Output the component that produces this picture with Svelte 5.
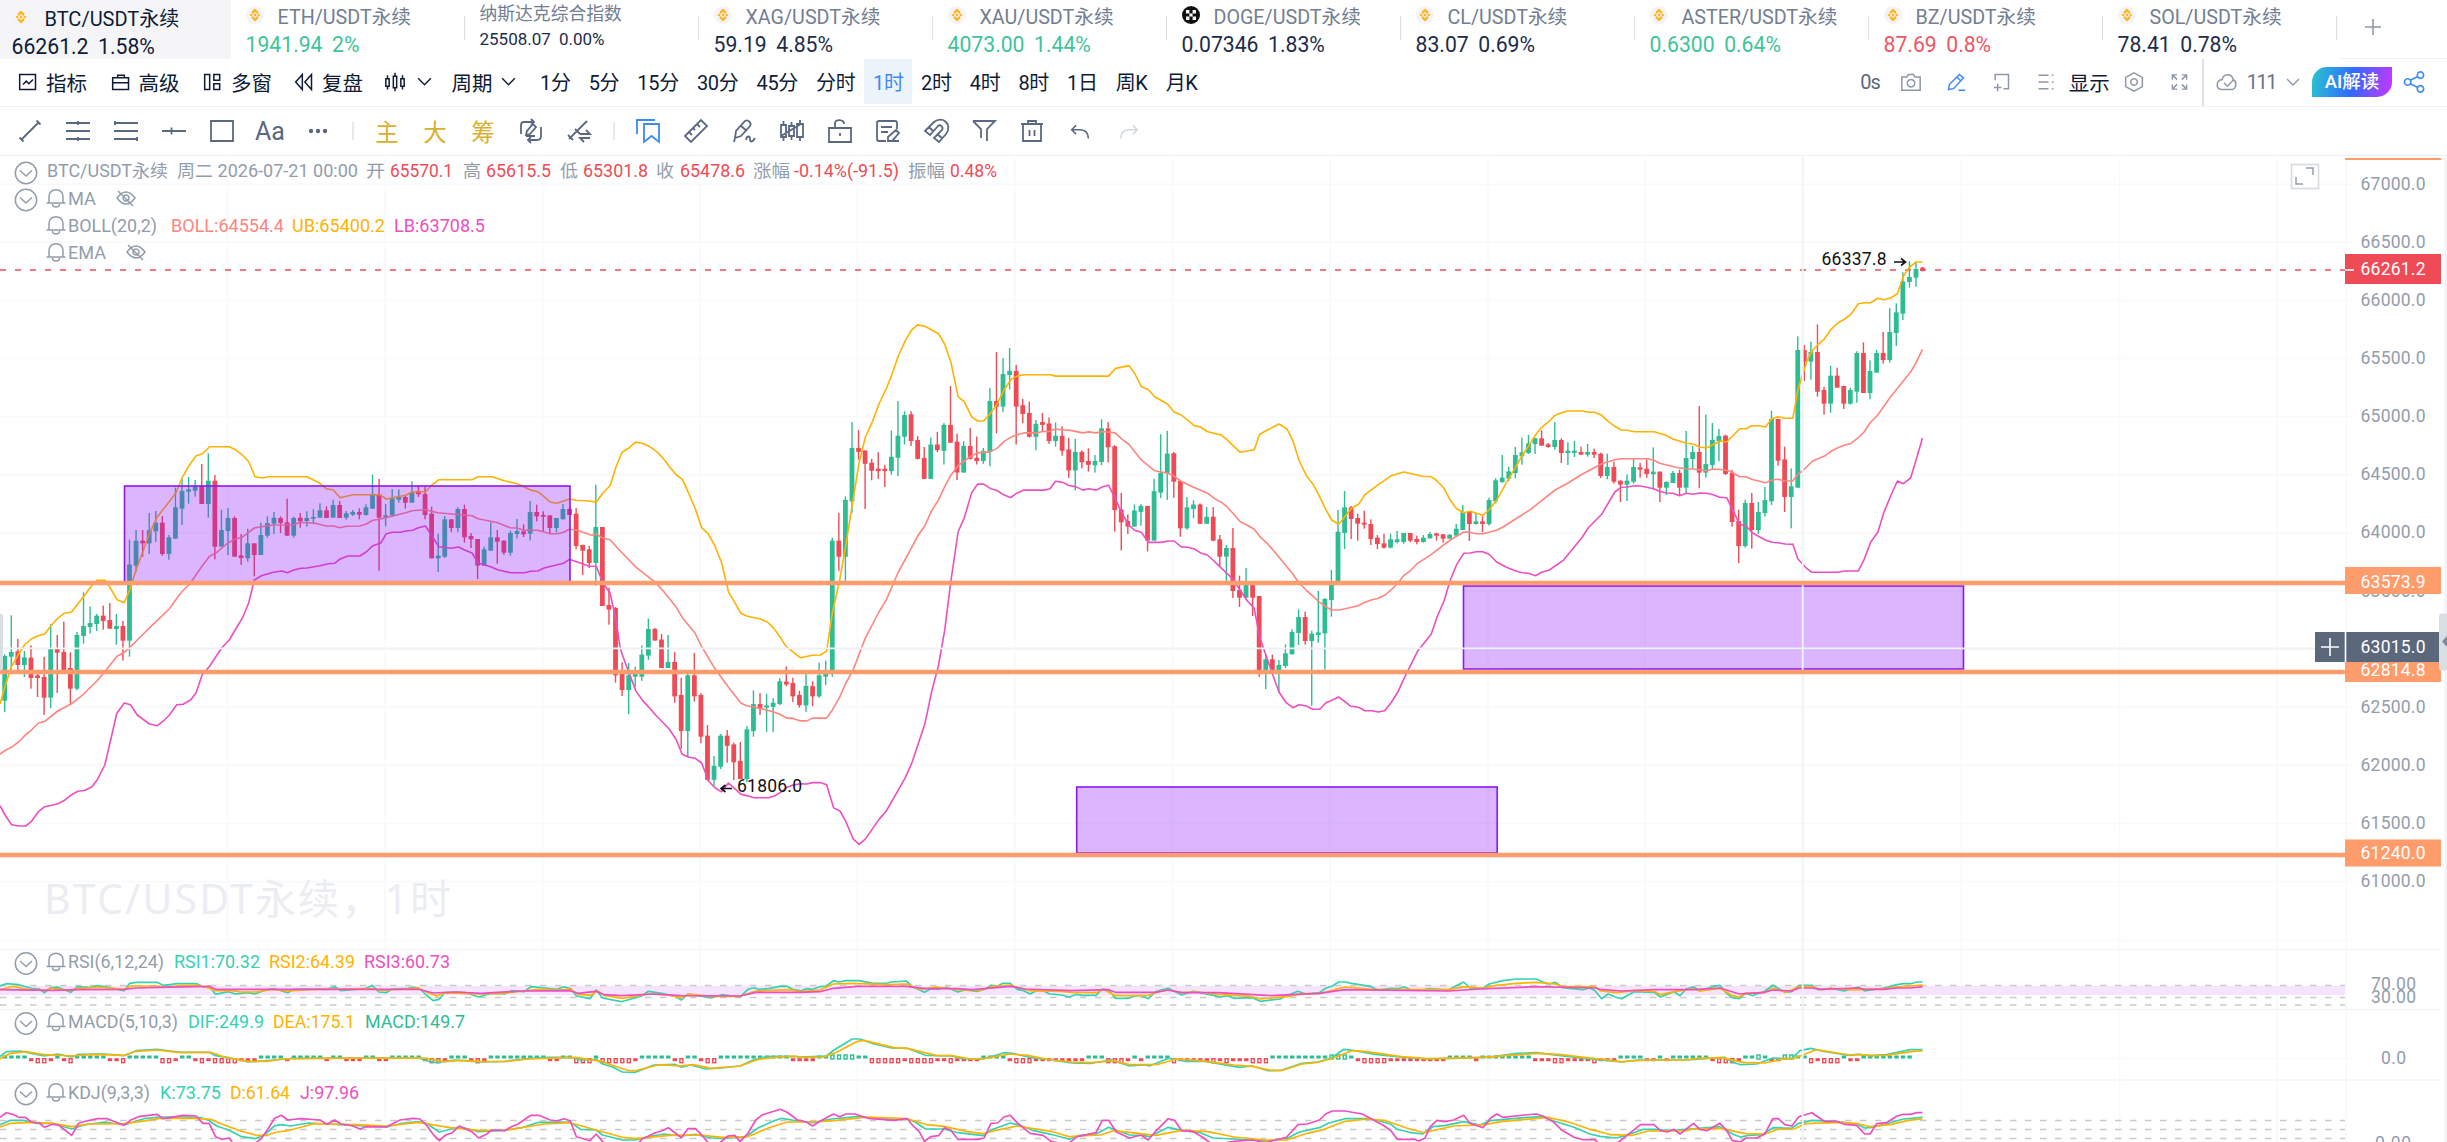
<script>
  const tickers = [
    { name: 'BTC/USDT永续', price: '66261.2', change: '1.58%', tone: 'dark', logo: 'bnb', active: true },
    { name: 'ETH/USDT永续', price: '1941.94', change: '2%', tone: 'up', logo: 'bnb' },
    { name: '纳斯达克综合指数', price: '25508.07', change: '0.00%', tone: 'flat', small: true },
    { name: 'XAG/USDT永续', price: '59.19', change: '4.85%', tone: 'flat', logo: 'bnb' },
    { name: 'XAU/USDT永续', price: '4073.00', change: '1.44%', tone: 'up', logo: 'bnb' },
    { name: 'DOGE/USDT永续', price: '0.07346', change: '1.83%', tone: 'flat', logo: 'okx' },
    { name: 'CL/USDT永续', price: '83.07', change: '0.69%', tone: 'flat', logo: 'bnb' },
    { name: 'ASTER/USDT永续', price: '0.6300', change: '0.64%', tone: 'up', logo: 'bnb' },
    { name: 'BZ/USDT永续', price: '87.69', change: '0.8%', tone: 'down', logo: 'bnb' },
    { name: 'SOL/USDT永续', price: '78.41', change: '0.78%', tone: 'flat', logo: 'bnb' }
  ];

  const periods = ['1分', '5分', '15分', '30分', '45分', '分时', '1时', '2时', '4时', '8时', '1日', '周K', '月K'];

  const tools = ['line', 'parallel', 'fib', 'hline', 'rect', 'text', 'dots', '|', '主', '大', '筹', 'autodraw', 'swap', '|',
    'bookmark', 'ruler', 'brush', 'patterns', 'lock', 'note', 'magnet', 'filter', 'trash', 'undo', 'redo'];

  // 24x24 stroke icons
  const icons = {
    line: 'M3.5 20.5 20.5 3.5M1.5 18.5l4 4M18.5 1.5l4 4',
    parallel: 'M0 4h24M0 12h24M0 20h24M12 2v4M12 18v4',
    fib: 'M0 4h24M0 12h24M0 20h24M1 2v4M23 18v4',
    hline: 'M0 12h24M9.5 8.5v7',
    rect: 'M1 2h22v20H1z',
    autodraw: 'M2 15V6c0-2 1-3 3-3h10M12 0l3 3-3 3M22 8v9c0 3-1 4-4 4H9M12 18l-3 3 3 3M7 16l1-4 6-7 3 3-6 7zM7 17h9',
    swap: 'M2 20 20 2M1 16l5 5M13 15h10l-4-4M23 19H13l4 4M8 10l5 5',
    bookmark: 'M8 5h15v18l-7.500-6L8 23zM1 15V1h18',
    ruler: 'M1 17 17 1l6 6L7 23zM5 13l3 3M9 9l2 2M13 5l3 3',
    brush: 'M3 19l1-7L13 2c3-2 7 2 5 5L9 17zM3 19l-1 4M9 7l6 5M14 21c1-5 4-4 4-1s2 4 5-1',
    patterns: 'M1 6h5v12H1zM9 7h5v10H9zM17 5h6v13h-6zM3.500 2v4M3.500 18v4M11.500 3v4M11.500 17v4M20 1v4M20 18v4M1 17l20-12',
    lock: 'M1 9h22v14H1zM7 9V4c0-4 9-4 9 1M12 14v3',
    note: 'M10 22H3c-1.500 0-2-.5-2-2V4c0-1.500.5-2 2-2h16c1.500 0 2 .5 2 2v6M5 8h11M5 13h7M12 22v-4l8-7 3 3-7 8zM16 22h7',
    magnet: 'M1 12 10 3c9-7 19 3 12 12l-7 8-5-4 8-8c2-3-2-6-4-4l-8 9zM5 8l4 4M13 15l5 4',
    filter: 'M1 2h22l-8 8v12M1 2l8 8v9',
    trash: 'M1 5h22M3 5v17h18V5M8 5V2h8v3M9.500 11v6M14.500 11v6',
    undo: 'M7 5 2 10l5 5M2 10h9c7 0 10 4 10 10',
    redo: 'M17 5l5 5-5 5M22 10h-9C6 10 3 14 3 20',
    indicator: 'M2 3h19v18H2zM6 15l4-4 3 3 5-5',
    briefcase: 'M2 7h19v14H2zM8 7V4h8v3M2 13h19',
    windows: 'M2 3h6v18H2zM13 3h7v7h-7zM13 14h7v7h-7z',
    rewind: 'M10 3v18L2 12zM21 3v18l-8-9z',
    candles: 'M1 8h4v9H1zM10 5h4v14h-4zM19 8h4v9h-4zM3 4v4M3 17v4M12 1v4M12 19v4M21 4v4M21 17v4',
    down: 'M4 8l8 8 8-8',
    camera: 'M1 6h6l2-3h6l2 3h6v16H1zM12 9a4.500 4.500 0 1 0 .1 0z',
    pencil: 'M3 21l1-6L16 3l5 4L9 20zM13 6l4 4M15 22h8',
    addfile: 'M5 10V3h16v17h-6M8 14v9M3.500 18.500h9',
    list: 'M3 4h12M3 12h12M3 20h12M19 4h2M19 12h2M19 20h2',
    gear: 'M12 1l10 5.500v11L12 23 2 17.500v-11zM12 8a4 4 0 1 0 .1 0z',
    expand: 'M3 9V3h6M15 3h6v6M21 15v6h-6M9 21H3v-6M3 3l6 6M21 3l-6 6M21 21l-6-6M3 21l6-6',
    cloud: 'M6 21h13c6-2 5-10 1-12-2-8-12-7-13 0-8 1-8 11-1 12zM9 13l4 4 7-7',
    share: 'M19 1a3.500 3.500 0 1 0 .1 0zM5 8.500a3.500 3.500 0 1 0 .1 0zM19 16a3.500 3.500 0 1 0 .1 0zM8 10l8-4M8 14l8 4'
  };

  const STEP = 6.568;
  const barX = (i) => 4.7 + i * STEP;

  // The series are stored in blocks; each has its own origin and units per pixel.
  const A = { x: 0, y: 420, sx: 2.529, sy: 3 };
  const B = { x: 600, y: 300, sx: 2.529, sy: 2.851 };
  const C = { x: 1200, y: 380, sx: 2.529, sy: 3 };
  const D = { x: 1780, y: 240, sx: 2.351, sy: 3 };
  const P = { x: 0, y: 860, sx: 1.912, sy: 3 };
  const Q = { x: 800, y: 940, sx: 1.912, sy: 3 };
  const R = { x: 1600, y: 900, sx: 1.851, sy: 3 };

  // colour + high, body top, body bottom, low
  const candleBlocks = [
    [A, 'u703,708,842,876 u586,696,710,763 d657,694,735,750 u693,712,735,771 d676,713,774,806 d750,766,774,831 d710,771,833,885 u612,686,833,864 d645,686,698,819 d605,696,750,755 d697,744,806,851 u636,645,806,811 u517,618,648,671 u559,609,621,641 u582,587,612,633 d557,587,603,629 d549,600,626,626 u582,618,627,674 d603,618,662,722 u359,434,662,710 u330,362,437,455 d330,362,370,410 u279,331,370,402 u273,308,334,366 d288,308,402,407 u345,352,402,419 u203,262,356,356 u177,213,266,315 u171,208,215,251 u180,199,212,230 d132,197,252,252 u100,182,252,293 d165,182,380,418 u269,330,380,380 u264,294,333,405 d289,294,410,410 d342,406,414,435 u326,370,415,425 d370,370,405,469 u308,345,405,405 u289,309,347,353 u276,293,311,342 d289,294,309,339 d236,307,347,347 u290,294,347,353 d279,293,304,323 u274,294,303,320 u268,291,296,311 u250,271,293,293 d259,271,294,294 u239,255,293,293 d243,255,294,294 u273,280,293,299 u270,276,284,288 d265,276,284,298 u253,262,285,287 u164,224,266,266 d177,224,293,452 u252,286,292,319 u207,235,286,290 u208,231,239,248 d228,231,248,266 u184,216,248,248 d197,213,223,231 d199,222,285,298 d260,281,415,415 u341,407,415,456 u288,298,410,414 d298,298,324,336 u262,267,324,336 d254,267,352,368 d339,348,358,384 d357,357,437,477 u380,388,437,437 u307,352,392,392 d330,352,365,431 d361,362,398,404 u332,339,398,407 u297,333,342,355 d313,334,343,351 u243,276,341,361 d254,276,289,304 d274,285,290,333 d286,286,324,339 u294,294,324,337 u252,267,298,298 d262,267,285,285 d264,281,378,388 d374,375,392,465 d378,388,429,444 u194,321,429,497 d321,321,558,558 d503,555,569,614 d561,564,766,788'],
    [B, 'd1033,1066,1112,1129 u1035,1070,1112,1181 u1045,1066,1074,1103 u985,1011,1074,1086 u908,938,1014,1026 d935,938,971,971 d952,968,1049,1049 u955,1032,1049,1049 d1004,1032,1130,1148 d1077,1126,1229,1280 u1066,1070,1229,1304 d1006,1070,1130,1145 d1121,1126,1245,1264 d1212,1242,1368,1370 u1300,1328,1368,1387 u1237,1242,1331,1337 d1226,1242,1271,1319 d1262,1267,1318,1369 d1260,1314,1366,1366 u1215,1224,1366,1375 u1113,1152,1229,1245 d1121,1152,1166,1183 u1123,1156,1162,1231 u1135,1148,1160,1232 u1078,1087,1152,1155 d1045,1088,1096,1101 d1077,1092,1130,1146 d1114,1126,1155,1162 u1066,1100,1156,1174 d1087,1101,1130,1158 u1034,1070,1130,1134 u1028,1066,1074,1098 u678,686,1056,1074 d607,686,732,772 u560,570,732,802 u348,422,574,607 d371,422,433,455 d429,429,467,596 d453,464,487,514 d434,481,488,510 d470,481,488,533 u372,447,488,498 u288,387,450,502 u317,328,390,412 d317,326,402,416 d388,399,453,455 d419,450,510,510 u392,412,510,510 d376,412,428,434 u351,356,430,469 d245,356,407,407 d381,404,492,513 u402,416,492,492 d365,416,453,455 d389,450,459,469 u422,430,459,467 u251,288,434,474 d148,288,304,380 u166,211,304,319 u137,202,214,255 d185,202,304,412 d282,300,325,351 d290,322,390,392 u342,353,390,428 d322,348,356,375 d335,352,402,410 u349,387,402,418 d360,387,430,444 d393,426,486,507 u396,433,486,543 d429,433,463,480 d423,459,470,489 u442,459,471,492 u340,366,462,471 d348,366,420,463 d414,417,599,660 d550,597,634,714 d611,630,646,667 u583,600,646,646 u582,587,604,644 d587,587,686,717 u510,545,686,686 u383,493,549,564 u373,438,493,570 d433,437,518,564 d513,516,651,675 u562,591,651,655 u571,583,596,622 d580,583,638,638 u590,618,638,638 d590,618,686,688'],
    [C, 'd465,478,530,558 u495,504,530,606 d444,504,633,654 d587,630,653,681 u564,612,653,653 d612,612,653,708 d648,648,870,890 u823,838,870,927 d824,838,870,880 u840,855,873,937 u793,820,858,864 u748,756,823,823 u688,711,759,795 d695,711,783,794 u752,761,783,977 u633,757,765,788 u654,657,760,869 u570,615,660,710 u390,455,605,605 u333,382,459,507 d378,382,417,477 d401,414,431,482 d392,428,434,446 d418,432,477,495 d465,473,492,507 d461,490,503,506 u461,478,503,505 u453,478,486,490 u459,459,486,491 d459,459,482,486 d467,477,486,493 u465,473,486,488 u456,462,475,476 d459,460,467,482 d462,463,476,488 u463,464,476,476 u432,446,467,467 u375,397,450,450 d393,395,432,483 u400,424,432,434 d409,424,432,456 u353,360,432,437 u295,301,364,370 u225,293,306,309 u260,274,296,303 u201,225,279,295 u173,217,229,254 u165,190,219,222 u173,175,192,222 d151,175,197,197 d189,193,201,203 u126,180,201,209 d175,180,219,249 u187,212,219,255 u183,212,219,231 d200,216,224,224 u192,216,224,230 d206,216,224,234 d218,221,288,294 u221,261,288,298 d245,261,305,311 d301,302,314,366 u283,302,314,363 u237,261,305,311 d249,262,269,293 d238,266,282,293 u202,275,283,329 d274,275,323,366 u304,306,323,345 u273,279,309,309 d269,279,323,347 u153,234,323,340 u198,216,237,266 d78,216,278,325 u104,252,278,293 u129,180,255,269 u147,168,183,244 d164,167,282,285 d270,278,426,440 d389,423,498,549 u359,369,498,503 d339,369,450,506 u366,396,450,462 u321,360,399,410 u92,117,364,375 d116,117,242,257 d200,238,351,396 u265,319,351,445'],
    [D, 'u289,330,743,743 d315,330,365,423 u305,336,365,419 d253,336,455,470 d440,450,491,524 u377,407,491,518 d383,407,443,443 d438,438,491,507 u443,450,491,494 u334,339,455,488 d307,339,459,459 u361,393,459,478 u330,339,398,398 d276,339,360,371 u205,276,360,368 u190,217,279,318 u97,124,221,240 u64,111,126,143 u68,87,113,140 d82,85,89,92']
  ];

  const candles = candleBlocks
    .flatMap(([f, rows]) => rows.split(' ').map((r) => ({
      up: r[0] === 'u',
      v: r.slice(1).split(',').map((n) => f.y + +n / f.sy)
    })))
    .map((c, i) => ({ ...c, x: barX(i) }));

  const trace = (...blocks) => 'M' + blocks.flatMap(([f, pts]) =>
    pts.split(' ').map((p) => {
      const [x, y] = p.split(',').map(Number);
      return (f.x + x / f.sx).toFixed(1) + ' ' + (f.y + y / f.sy).toFixed(1);
    })).join('L');

  const upper = trace(
    [A, '0,852 15,790 29,740 45,706 62,675 79,657 95,648 113,642 130,616 146,595 162,580 181,576 211,530 232,497 245,481 266,481 279,504 296,539 314,548 328,510 344,450 360,400 378,340 397,292 428,245 445,218 461,172 477,139 496,107 511,102 530,80 580,80 598,91 614,106 629,125 645,170 663,174 678,170 777,170 809,190 825,206 843,210 860,233 893,224 960,224 977,237 1026,226 1042,216 1076,215 1092,195 1110,179 1194,179 1209,170 1245,170 1275,182 1308,191 1342,210 1360,215 1376,230 1391,246 1409,250 1440,237 1457,241 1490,243 1508,247 1524,220 1543,197 1558,140 1568,112'],
    [B, '56,434 74,421 90,405 108,409 123,416 141,430 157,448 175,474 193,499 208,511 223,548 241,595 257,649 273,665 290,700 307,747 325,832 341,863 356,893 371,901 389,906 405,909 423,918 438,934 455,960 470,987 488,1003 507,1020 537,1013 558,1012 573,1001 588,890 606,800 620,710 637,590 655,465 671,392 689,347 706,295 724,253 739,210 754,161 772,116 788,86 803,71 822,75 856,96 872,127 887,175 906,276 921,290 940,333 955,345 970,345 986,325 1004,297 1022,256 1040,226 1055,217 1072,213 1138,213 1152,217 1286,217 1304,195 1338,187 1353,211 1369,247 1387,256 1403,276 1436,297 1452,319 1470,328 1503,358 1519,362 1535,375 1567,384'],
    [C, '52,163 68,179 102,217 137,209 151,163 167,152 200,132 220,147 235,182 250,240 269,287 285,311 301,346 318,388 333,420 351,433 384,384 401,373 417,344 451,314 484,287 515,276 563,289 585,290 600,303 617,325 633,361 649,386 667,398 683,394 715,406 731,390 750,361 775,308 799,260 815,225 830,200 849,164 864,142 882,125 898,106 915,98 931,93 968,93 982,97 998,97 1016,106 1032,124 1049,139 1065,150 1081,151 1099,155 1149,155 1178,166 1196,177 1230,190 1246,192 1264,201 1281,204 1316,183 1332,186 1365,146 1381,146 1395,137 1415,137 1430,141 1446,116 1462,110 1480,115 1499,115'],
    [D, '30,535 42,450 53,405 65,358 77,330 89,314 104,298 120,268 135,250 152,237 166,224 184,191 198,188 213,188 230,175 244,179 260,174 276,161 290,108 304,82 320,66 335,66']
  );
  const middle = trace(
    [A, '0,1002 15,990 31,980 47,966 64,945 79,931 97,909 113,904 146,873 181,851 211,823 245,783 266,754 296,709 314,697 328,682 344,664 370,633 397,602 428,567 444,540 461,514 480,492 511,438 530,409 545,400 576,369 594,358 612,352 643,324 660,320 691,315 743,314 759,307 797,310 825,318 843,318 860,323 876,319 910,318 926,312 943,301 960,298 1026,278 1042,272 1076,269 1107,278 1194,287 1209,296 1259,308 1290,323 1308,324 1325,331 1360,331 1391,341 1410,341 1425,337 1440,328 1460,331 1496,346 1508,342 1524,354 1543,359 1568,392'],
    [B, '57,722 90,761 123,790 137,802 160,830 193,876 208,905 241,951 257,988 290,1050 325,1104 356,1149 371,1157 405,1164 438,1174 455,1181 472,1192 488,1193 507,1200 523,1200 538,1192 573,1192 588,1168 606,1133 622,1092 640,1055 671,964 706,888 724,855 739,816 754,777 788,706 805,670 822,643 838,602 856,570 872,531 887,500 906,472 921,459 940,444 955,436 986,433 1004,423 1022,403 1040,391 1055,384 1072,379 1105,379 1119,375 1136,375 1152,368 1168,370 1186,371 1221,379 1236,376 1255,379 1270,375 1303,379 1319,396 1338,412 1369,456 1403,487 1436,494 1452,502 1468,516 1500,533 1535,550 1553,565 1567,575'],
    [C, '52,365 68,380 85,402 102,425 120,436 137,448 151,469 170,490 200,532 235,583 250,608 269,631 300,664 318,680 333,690 353,690 400,677 417,667 435,659 451,655 468,645 484,629 500,610 515,587 533,571 550,550 585,523 633,480 667,456 683,457 699,461 716,461 750,451 767,440 815,404 833,391 898,330 931,309 964,284 1016,251 1049,239 1065,236 1132,236 1147,240 1162,250 1209,263 1230,266 1246,267 1281,272 1298,267 1325,269 1341,274 1365,290 1381,290 1395,298 1430,308 1450,299 1463,298 1476,302 1499,303'],
    [D, '30,722 42,703 55,690 77,663 89,656 106,647 120,634 135,624 152,615 166,611 184,593 198,575 213,547 230,525 260,470 307,396 320,368 335,328']
  );
  const lower = trace(
    [A, '0,1157 13,1185 29,1214 48,1218 65,1218 79,1205 97,1175 113,1160 131,1156 147,1151 163,1141 181,1124 197,1114 215,1111 232,1101 246,1079 265,1035 280,960 295,881 314,849 330,854 347,885 378,912 398,917 414,902 428,886 447,854 463,853 482,840 496,818 511,765 530,739 560,685 580,660 596,627 614,592 629,548 643,480 661,467 691,457 713,453 727,458 743,450 761,445 776,444 809,437 830,431 846,430 860,417 880,408 910,408 926,396 943,377 963,369 977,341 992,337 1013,337 1026,333 1044,331 1058,323 1076,318 1110,380 1141,385 1160,381 1175,390 1194,399 1209,429 1241,440 1259,449 1291,458 1326,458 1342,454 1360,453 1376,444 1425,430 1440,418 1460,426 1490,439 1508,439 1524,487 1543,520 1558,600 1568,680'],
    [B, '56,1010 74,1065 91,1115 108,1142 123,1160 141,1184 175,1223 193,1254 208,1295 224,1303 241,1307 257,1320 275,1372 290,1390 307,1402 325,1377 341,1393 356,1409 371,1413 389,1419 425,1419 441,1414 458,1403 472,1390 488,1383 507,1379 523,1380 538,1376 557,1376 573,1382 591,1448 607,1457 622,1487 640,1536 655,1552 671,1537 706,1480 724,1457 754,1398 772,1362 788,1322 822,1207 838,1120 856,1042 872,940 887,805 906,660 921,622 940,549 955,525 970,525 988,538 1004,543 1020,555 1039,563 1055,550 1072,542 1123,542 1138,538 1152,517 1170,520 1186,529 1203,532 1221,542 1236,538 1255,542 1270,533 1286,528 1303,566 1319,606 1338,643 1353,657 1369,662 1387,691 1420,691 1436,687 1452,687 1470,704 1486,705 1502,709 1519,721 1536,727 1553,744 1567,760'],
    [C, '50,560 84,598 102,631 120,663 137,685 151,772 185,888 200,937 218,968 235,983 250,974 269,978 285,988 303,988 318,969 351,951 382,979 401,982 417,992 435,992 451,996 467,992 484,967 500,937 515,898 550,814 567,789 585,762 600,710 617,663 633,600 649,554 667,520 683,519 699,515 715,515 731,523 750,546 775,562 799,573 815,578 830,580 849,587 864,577 882,571 898,558 918,542 967,471 982,443 1016,403 1049,336 1065,322 1081,321 1099,317 1114,318 1130,322 1147,326 1162,334 1180,339 1196,340 1213,347 1230,340 1246,343 1264,339 1281,340 1298,344 1314,352 1332,353 1365,433 1381,438 1397,459 1430,480 1446,487 1462,488 1480,492 1499,493'],
    [D, '30,912 42,957 60,982 75,997 135,997 152,993 184,993 198,958 213,907 230,877 244,818 260,768 276,723 290,731 307,714 320,660 335,594']
  );

  const studies = [
    { c: 'teal', d: trace(
      [P, '0,378 12,371 36,374 60,385 75,387 85,398 97,383 110,381 135,397 148,380 172,382 187,377 200,380 237,392 248,370 260,367 300,367 312,376 340,371 376,371 390,382 400,379 412,403 437,395 450,402 474,398 487,402 512,388 525,386 550,398 562,388 600,387 625,388 640,380 652,392 700,385 712,376 724,396 738,398 750,387 780,385 790,381 803,387 815,405 828,422 840,418 850,398 875,396 890,398 915,411 940,400 965,402 978,392 1002,395 1015,380 1042,384 1065,388 1078,380 1092,386 1102,408 1128,416 1140,390 1152,414 1188,425 1227,408 1240,394 1265,400 1290,408 1303,420 1315,402 1360,414 1380,404 1415,411 1430,388 1442,383 1450,388 1470,386 1490,379 1505,379 1517,389 1528,391'],
      [Q, '0,154 12,146 24,148 38,140 50,138 64,122 75,126 88,122 113,122 140,130 165,130 175,126 203,123 215,140 238,157 250,146 265,148 280,142 302,156 315,150 340,154 355,147 365,136 378,138 388,130 402,130 415,148 428,152 440,162 452,152 465,152 477,162 500,165 515,171 528,163 540,166 566,166 578,147 590,150 603,175 628,175 640,168 652,166 666,176 680,155 690,150 704,145 730,165 752,154 765,158 790,166 805,171 817,167 830,175 865,173 880,184 918,177 930,167 952,154 967,162 993,158 1005,145 1018,138 1030,126 1042,126 1055,130 1092,140 1105,150 1130,145 1142,146 1155,141 1168,150 1190,150 1203,146 1240,150 1254,138 1269,126 1281,144 1306,145 1318,132 1344,122 1370,117 1408,117 1420,126 1432,132 1444,127 1458,143 1497,149 1510,144 1520,152'],
      [R, '3,296 15,282 27,290 40,296 63,275 100,277 112,291 137,275 148,287 160,266 173,260 185,273 210,259 222,256 234,280 245,293 258,296 270,279 282,287 305,274 320,256 342,277 355,275 368,256 392,256 404,269 428,265 452,273 478,261 490,273 525,264 550,254 562,251 575,251 587,246 597,246']) },
    { c: 'amber', d: trace(
      [P, '0,390 24,379 50,387 85,392 100,384 130,392 150,385 190,382 237,388 250,378 300,378 320,381 345,377 380,376 400,385 412,392 440,391 460,396 490,396 520,388 550,393 600,388 712,386 730,391 800,384 820,400 835,408 850,399 910,402 960,400 1000,393 1030,388 1070,390 1090,387 1105,403 1130,406 1142,392 1155,406 1190,415 1240,402 1275,405 1303,413 1318,402 1360,409 1415,409 1445,393 1510,389'],
      [Q, '0,155 38,150 64,132 100,130 165,134 203,132 230,148 260,141 300,149 345,151 370,139 402,136 440,152 500,154 520,157 566,158 580,148 603,167 666,166 690,153 704,150 730,158 760,156 800,163 860,169 880,177 935,169 960,161 993,161 1020,150 1042,141 1100,149 1240,149 1269,140 1306,145 1330,136 1370,130 1408,127 1444,132 1458,140 1520,140'],
      [R, '0,272 30,278 63,272 100,274 112,284 137,275 173,266 185,273 222,265 245,287 258,291 270,279 305,278 320,265 345,277 368,260 392,260 410,269 428,265 470,270 525,266 562,259 597,255']) },
    { c: 'pink', d: trace(
      [P, '0,389 100,391 150,389 237,388 260,384 300,382 400,379 412,388 800,388 828,399 870,396 920,400 1000,393 1090,392 1105,400 1140,394 1155,404 1190,407 1250,402 1303,407 1415,408 1445,397 1520,397'],
      [Q, '0,157 38,155 64,145 110,139 203,139 240,146 300,146 330,149 402,139 430,147 520,152 590,149 603,157 680,157 704,150 730,158 800,158 900,167 993,160 1042,149 1240,153 1300,147 1408,140 1520,144'],
      [R, '0,268 40,273 100,269 173,269 222,264 258,282 300,278 320,270 355,273 368,264 392,264 410,268 478,264 490,268 525,268 550,264 575,264 597,260']) },
    { c: 'teal', d: trace(
      [P, '0,590 12,575 40,573 60,580 85,588 110,582 137,591 150,583 200,582 237,587 260,572 300,568 345,577 400,577 412,587 437,593 475,606 525,600 560,595 712,594 800,594 820,604 835,608 870,600 915,606 965,604 1010,596 1050,592 1092,592 1110,600 1140,598 1152,612 1170,620 1190,636 1215,637 1250,615 1290,613 1303,622 1320,615 1350,627 1380,624 1415,618 1440,600 1465,590 1505,589'],
      [Q, '0,351 50,348 65,330 100,297 115,297 140,311 175,324 205,325 240,346 290,348 310,356 350,357 390,338 410,341 440,352 480,360 520,369 555,370 595,360 630,378 660,374 668,378 705,355 720,358 735,364 775,364 840,382 865,378 895,392 920,391 960,370 990,366 1015,355 1040,328 1060,332 1100,343 1160,353 1200,357 1250,355 1320,351 1370,340 1408,338 1450,346 1500,355'],
      [R, '0,480 40,486 70,480 160,480 230,472 245,486 260,494 290,492 320,474 345,476 355,476 370,452 390,445 420,456 462,466 478,463 500,467 530,464 575,449 597,449']) },
    { c: 'amber', d: trace(
      [P, '0,596 20,580 50,575 80,583 137,588 180,583 237,586 260,574 300,570 340,577 403,577 430,592 475,604 510,604 540,597 600,595 812,594 850,605 880,601 920,605 970,604 1010,597 1100,592 1150,604 1170,616 1200,631 1215,632 1260,614 1300,618 1325,614 1360,625 1415,618 1450,598 1490,591 1520,588'],
      [Q, '0,352 45,351 70,337 110,304 122,301 180,323 205,325 260,346 290,347 325,357 355,355 400,342 435,346 480,360 520,366 555,368 600,363 630,374 685,373 720,357 760,361 830,375 865,379 900,391 922,391 960,372 990,367 1020,354 1055,332 1080,334 1150,350 1200,356 1310,352 1350,347 1408,340 1450,343 1520,356'],
      [R, '0,477 40,485 90,480 160,480 180,475 225,473 265,487 305,489 340,476 360,475 400,449 462,465 480,463 500,467 530,466 580,454 597,453']) },
    { c: 'teal', d: trace(
      [P, '0,794 20,781 45,781 70,790 100,790 137,807 160,795 200,786 237,795 275,776 305,771 350,771 385,773 400,782 415,799 437,810 460,829 487,836 505,826 525,797 540,794 555,798 590,789 625,792 675,796 700,798 740,801 765,791 800,785 815,790 840,816 865,806 880,800 915,815 965,811 1000,802 1030,787 1090,786 1110,808 1140,810 1152,825 1190,840 1215,840 1240,830 1270,822 1303,828 1330,823 1360,834 1380,835 1425,831 1450,803 1480,782 1495,775 1525,783'],
      [Q, '0,544 24,548 60,537 110,530 160,537 205,537 220,546 240,567 275,567 302,578 350,587 365,570 402,549 420,556 445,571 480,583 515,598 535,586 566,582 590,562 630,585 655,586 668,590 704,562 730,571 765,578 790,594 830,597 890,603 930,596 955,576 993,563 1010,550 1042,536 1090,536 1110,544 1130,553 1142,568 1165,577 1190,582 1210,560 1232,557 1269,545 1300,555 1320,542 1385,533 1420,530 1440,542 1480,562 1510,582'],
      [R, '0,709 30,714 50,706 80,688 100,688 130,692 160,688 222,680 245,702 260,711 275,706 300,704 320,683 355,685 368,670 392,661 438,665 475,672 490,684 505,682 530,671 562,657 597,652']) },
    { c: 'amber', d: trace(
      [P, '0,801 20,790 60,787 100,790 137,800 170,792 237,791 280,782 305,775 370,775 403,778 425,793 460,813 490,826 510,826 530,816 550,812 600,791 680,794 740,798 800,787 860,803 920,812 970,810 1040,792 1090,788 1140,810 1190,832 1215,836 1280,826 1340,825 1380,832 1430,830 1470,803 1505,786'],
      [Q, '0,546 30,546 70,541 130,531 205,536 240,553 275,559 320,575 350,581 375,571 415,558 480,574 515,590 545,587 575,585 600,572 680,586 730,571 780,575 830,591 890,600 930,600 970,580 1000,569 1042,544 1085,537 1120,542 1160,564 1192,578 1250,558 1310,554 1340,545 1430,532 1470,546 1510,568'],
      [R, '0,695 20,704 60,706 90,693 160,692 173,687 222,685 270,701 305,702 330,688 360,687 380,671 450,667 478,671 500,680 540,673 570,661 597,657']) },
    { c: 'pink', d: trace(
      [P, '0,772 12,758 24,763 36,772 48,772 60,786 75,789 85,802 100,793 112,795 137,826 150,790 165,783 187,776 205,776 237,796 250,780 265,770 300,763 312,776 350,766 375,768 388,790 400,790 412,830 424,838 438,834 450,860 480,860 500,835 512,808 525,775 538,766 550,780 575,776 612,780 625,793 640,780 652,792 675,798 688,807 700,800 738,801 765,780 790,775 803,777 815,795 828,823 840,842 852,825 865,818 878,798 902,815 915,834 930,823 940,810 965,812 978,800 990,793 1015,766 1030,766 1052,780 1065,783 1078,776 1090,782 1102,830 1128,842 1140,822 1155,850 1165,870 1215,860 1227,838 1252,819 1265,813 1278,803 1303,833 1315,806 1330,806 1342,826 1355,850 1375,850 1392,828 1405,826 1415,845 1430,820 1445,780 1458,764 1492,748 1505,757 1525,780'],
      [Q, '0,541 12,546 24,558 38,544 64,522 76,530 88,522 105,522 130,535 180,541 205,536 215,555 228,575 238,604 250,590 265,587 276,563 288,570 302,598 340,598 352,594 365,550 378,549 390,531 402,526 415,548 440,580 465,586 480,604 510,615 530,590 566,578 578,541 590,541 605,576 630,594 652,585 666,600 680,574 704,536 716,541 730,572 752,575 770,592 790,615 830,604 865,600 890,608 910,600 930,592 952,554 970,552 993,540 1005,522 1018,513 1042,513 1075,522 1100,543 1115,556 1130,572 1142,598 1175,598 1183,603 1195,594 1205,560 1218,541 1232,545 1250,540 1269,526 1281,550 1306,563 1320,535 1332,522 1344,532 1385,525 1408,522 1420,528 1440,545 1457,571 1480,592 1497,599 1520,599'],
      [R, '0,735 20,740 38,722 50,706 75,674 100,674 112,692 125,696 137,688 148,702 173,670 185,688 198,692 222,670 234,690 245,722 260,726 270,714 290,714 305,702 320,656 330,656 342,674 355,678 368,650 392,638 415,664 438,664 452,673 475,676 490,702 500,702 512,671 530,668 550,648 562,643 575,643 587,638 597,638']) }
  ];

  // MACD histogram as runs: g/r are short filled bars, G/R tall hollow ones
  const histogram = 'g4 r1 R2 r1 g1 r1 R1 g5 r2 R1 g5 R2 r1 g2 r1 R1 r1 R4 r3 g4 r1 g5 r1 g2 r3 g2 r2 g5 r1 R2 r1 g3 r1 R1 r1 g9 r2 g2 R3 g1 R5 r1 g5 r1 R1 g2 r1 R2 g11 r1 r3 g2 G4 g2 R5 r1 R4 r2 R1 r4 g4 r1 R3 r8 g3 R3 r1 g1 r1 g4 R1 r5 R1 r1 R1 r3 R3 g1 g8 G3 g1 r1 R4 r9 g4 r1 g8 r3 R2 r4 R1 r3 g4 r2 g1 r1 g6 r1 R3 r1 g2 G1 g1 r2 G2 g2 R1 r1 R3 g1 r2 g8'
    .split(' ')
    .flatMap((t) => Array(+t.slice(1)).fill(t[0]))
    .map((t, i) => ({
      x: barX(i) - 2,
      up: t === 'g' || t === 'G',
      tall: t === 'G' || t === 'R'
    }));

  const gridX = [227.5, 385, 542.5, 700, 857.5, 1015, 1172.5, 1330, 1488, 1645, 1961.5, 2119.5, 2277];
  const axis = ['67000.0', '66500.0', '66000.0', '65500.0', '65000.0', '64500.0', '64000.0', '63500.0', '', '62500.0', '62000.0', '61500.0', '61000.0']
    .map((label, i) => ({ label, y: 184.200 + i * 58.120 }));
  const guides = [985.500, 997.500, 1005, 1120.500, 1129.500, 1138.500];
  const zones = [[124.500, 486, 445.500, 96.500], [1463.500, 586, 500, 83], [1076.700, 787, 420.500, 66]];
  const levels = [583, 672, 855];

  // [x, width, class, text]
  const legends = [
    { y: 177, fold: 173, items: [[47, 121, 'muted', 'BTC/USDT永续'], [177, 181, 'muted', '周二 2026-07-21 00:00'], [366, 19, 'muted', '开'], [390, 63, 'red', '65570.1'], [463, 18, 'muted', '高'], [486, 65, 'red', '65615.5'], [560, 18, 'muted', '低'], [583, 65, 'red', '65301.8'], [656, 18, 'muted', '收'], [680, 65, 'red', '65478.6'], [753, 37, 'muted', '涨幅'], [794, 105, 'red', '-0.14%(-91.5)'], [908, 37, 'muted', '振幅'], [950, 47, 'red', '0.48%']] },
    { y: 204.500, fold: 200, bell: 198, eye: 126, items: [[68, 28, 'muted', 'MA']] },
    { y: 231.500, bell: 225, items: [[68, 89, 'muted', 'BOLL(20,2)'], [171, 113, 'coral', 'BOLL:64554.4'], [292, 93, 'amber', 'UB:65400.2'], [394, 91, 'pink', 'LB:63708.5']] },
    { y: 258.500, bell: 252, eye: 136, items: [[68, 38, 'muted', 'EMA']] },
    { y: 968, fold: 963.500, bell: 961.500, items: [[68, 96, 'muted', 'RSI(6,12,24)'], [174, 86, 'teal', 'RSI1:70.32'], [269, 86, 'amber', 'RSI2:64.39'], [364, 86, 'pink', 'RSI3:60.73']] },
    { y: 1028, fold: 1023.500, bell: 1021.500, items: [[68, 110, 'muted', 'MACD(5,10,3)'], [188, 76, 'teal', 'DIF:249.9'], [273, 82, 'amber', 'DEA:175.1'], [365, 100, 'green', 'MACD:149.7']] },
    { y: 1098.500, fold: 1094, bell: 1092, items: [[68, 82, 'muted', 'KDJ(9,3,3)'], [160, 61, 'teal', 'K:73.75'], [230, 60, 'amber', 'D:61.64'], [300, 59, 'pink', 'J:97.96']] }
  ];
</script>

{#snippet icon(name, cls = '')}
  <svg class="icon {cls}" viewBox="0 0 24 24"><path d={icons[name]} /></svg>
{/snippet}

<div class="app">
  <header class="tickers">
    {#each tickers as t}
      <div class="ticker" class:active={t.active} class:small={t.small}>
        <div class="name">
          {#if t.logo === 'bnb'}
            <svg class="coin" viewBox="0 0 18 18"><circle cx="9" cy="9" r="9" fill="#f4f4f8" /><path d="M9 2.500l3.800 3.800-1.600 1.600L9 5.700 6.800 7.900 5.200 6.300zM9 15.500l-3.800-3.800 1.600-1.600L9 12.300l2.200-2.200 1.600 1.600zM3.500 9l1.600-1.600L6.700 9l-1.600 1.600zM11.300 9l1.600-1.600L14.500 9l-1.600 1.600zM7.300 9 9 7.300 10.700 9 9 10.700z" fill="#fdb41e" /></svg>
          {:else if t.logo === 'okx'}
            <svg class="coin" viewBox="0 0 18 18"><circle cx="9" cy="9" r="9" fill="#111" /><path d="M4 4h3.400v3.400H4zM10.600 4H14v3.400h-3.400zM7.400 7.400h3.200v3.200H7.400zM4 10.600h3.400V14H4zM10.600 10.600H14V14h-3.400z" fill="#fff" /></svg>
          {/if}
          <span>{t.name}</span>
        </div>
        <div class="quote {t.tone}"><span>{t.price}</span><span>{t.change}</span></div>
      </div>
    {/each}
    <div class="add"><svg viewBox="0 0 16 16"><path d="M8 0v16M0 8h16" /></svg></div>
  </header>

  <nav class="menu">
    <div class="entry first">{@render icon('indicator')}指标</div>
    <div class="entry">{@render icon('briefcase')}高级</div>
    <div class="entry">{@render icon('windows')}多窗</div>
    <div class="entry replay">{@render icon('rewind')}复盘</div>
    <div class="entry kind">{@render icon('candles')}{@render icon('down', 'chev')}</div>
    <div class="entry cycle">周期{@render icon('down', 'chev')}</div>
    <div class="periods">
      {#each periods as p}
        <span class="period" class:on={p === '1时'}>{p}</span>
      {/each}
    </div>
    <div class="right">
      <span class="lag">0s</span>
      {@render icon('camera', 'grey')}
      {@render icon('pencil', 'blue')}
      {@render icon('addfile', 'grey')}
      <span class="show">{@render icon('list', 'grey')}<span>显示</span>{@render icon('gear', 'grey')}</span>
      {@render icon('expand', 'grey full')}
      <span class="cloud">{@render icon('cloud', 'grey')}<b>111</b>{@render icon('down', 'grey chev')}</span>
      <span class="ai">AI解读</span>
      {@render icon('share', 'blue')}
    </div>
  </nav>

  <div class="tools">
    {#each tools as t}
      {#if t === '|'}
        <i class="sep"></i>
      {:else if t === 'text'}
        <span class="tool aa">Aa</span>
      {:else if t === 'dots'}
        <span class="tool"><svg class="icon solid" viewBox="0 0 24 24"><circle cx="5" cy="12" r="2.200" /><circle cx="12" cy="12" r="2.200" /><circle cx="19" cy="12" r="2.200" /></svg></span>
      {:else if icons[t]}
        <span class="tool {t}">{@render icon(t)}</span>
      {:else}
        <span class="tool gold">{t}</span>
      {/if}
    {/each}
  </div>

  <svg class="chart" viewBox="0 158 2447 984">
    <g class="grid">
      {#each gridX as x}<path d="M{x} 158V1142" />{/each}
      {#each axis as a}<path d="M0 {a.y}H2353" />{/each}
      <path d="M0 940.500H2353M0 1058.500H2353M2346 158V1142" />
      <path class="rule" d="M0 949.500H2441M0 1009.500H2441M0 1080H2441" />
    </g>

    <text class="watermark" x="44" y="914" textLength="407">BTC/USDT永续，1时</text>

    <path class="last" d="M0 270H2345" />

    {#each candles as c}
      <g class={c.up ? 'up' : 'down'}>
        <rect x={c.x - 0.7} y={c.v[0]} width="1.400" height={c.v[3] - c.v[0]} />
        <rect x={c.x - 2.400} y={c.v[1]} width="4.800" height={c.v[2] - c.v[1]} />
      </g>
    {/each}
    <circle cx="1922.500" cy="269.300" r="2.200" class="down" />

    <path class="series amber" d={upper} />
    <path class="series coral" d={middle} />
    <path class="series pink" d={lower} />

    {#each zones as [x, y, w, h]}
      <rect class="zone" {x} {y} width={w} height={h} />
    {/each}

    <rect class="band" x="0" y="986" width="2345" height="9" />
    {#each guides as y}<path class="guide" d="M0 {y}H2345" />{/each}

    {#each histogram as h}
      {#if h.tall}
        <rect class="hollow {h.up ? 'up' : 'down'}" x={h.x + 0.7} y={h.up ? 1055 : 1058.700} width="3" height="4" />
      {:else}
        <rect class={h.up ? 'up' : 'down'} x={h.x} y={h.up ? 1055.500 : 1058.200} width="4.400" height="3" />
      {/if}
    {/each}
    {#each studies as s}<path class="series study {s.c}" d={s.d} />{/each}

    <path class="cross" d="M0 648.300H2345M1802.700 158V1142" />

    {#each levels as y}<path class="level" d="M0 {y}H2345" />{/each}

    {#each legends as l}
      {#if l.fold}
        <g class="mark"><circle cx="26" cy={l.fold} r="10.700" /><path d="M20 {l.fold - 2.500}l6 5.500 6-5.500" /></g>
      {/if}
      {#if l.bell}
        <path class="mark bell" d="M46.500 {l.bell + 5}h19M49 {l.bell + 4.500}v-6c0-9 14-9 14 0v6M52.500 {l.bell + 6}c0 4 7 4 7 0" />
      {/if}
      {#if l.eye}
        <path class="mark" d="M{l.eye - 9} {l.bell}q9-12 18 0q-9 12-18 0zM{l.eye} {l.bell - 3}a3 3 0 1 0 .1 0zM{l.eye - 8} {l.bell - 7}l15 15" />
      {/if}
      {#each l.items as [x, w, cls, text]}
        <text class="legend {cls}" {x} y={l.y} textLength={w} lengthAdjust="spacingAndGlyphs">{text}</text>
      {/each}
    {/each}

    <text class="note" x="1821.500" y="264.500" textLength="65">66337.8</text>
    <path class="arrow" d="M1894 262H1905M1901 258.500l4.500 3.500-4.500 3.500" />
    <text class="note" x="737" y="791.500" textLength="65">61806.0</text>
    <path class="arrow" d="M732 788.500H721M725.500 785l-4.500 3.500 4.500 3.500" />

    <g class="corner"><rect x="2291.500" y="164.500" width="27" height="24" /><path d="M2306 168h7v7M2296 177v7h7" /></g>

    {#each axis as a}
      <text class="axis" x="2360.500" y={a.y + 5.500} textLength="65">{a.label}</text>
    {/each}
    <text class="axis" x="2371" y="990" textLength="45">70.00</text>
    <text class="axis" x="2371" y="1002.500" textLength="45">30.00</text>
    <text class="axis" x="2381" y="1064" textLength="25">0.0</text>
    <text class="axis" x="2375" y="1149" textLength="36">0.00</text>

    <rect class="orange" x="2345" y="158" width="96" height="2" />
    <rect class="orange" x="2345" y="567" width="96" height="27" />
    <rect class="orange" x="2345" y="656" width="96" height="26" />
    <rect class="orange" x="2345" y="839.500" width="96" height="27" />
    <rect class="down" x="2345" y="254" width="96" height="30" />
    <path class="tick" d="M2345 270h9" />
    <rect class="slate" x="2315" y="632" width="126" height="30" />
    <path class="tick" d="M2345.500 632v30M2330 638v18M2321 647h18" />
    <text class="tag" x="2360.500" y="587.500" textLength="65">63573.9</text>
    <text class="tag" x="2360.500" y="676" textLength="65">62814.8</text>
    <text class="tag" x="2360.500" y="859" textLength="65">61240.0</text>
    <text class="tag" x="2360.500" y="275" textLength="65">66261.2</text>
    <text class="tag" x="2360.500" y="653" textLength="65">63015.0</text>

    <rect x="2444.500" y="158" width="3" height="984" fill="#f1f3f8" />
    <rect x="2439" y="613.500" width="12" height="57" rx="3" fill="#d9dee3" />
    <path d="M2447 636v11l-5-5.500z" fill="#7e8b9b" />
    <rect x="-6" y="613.500" width="9" height="57" rx="3" fill="#d9dee3" />
  </svg>
</div>

<style>
  :global(body) {
    background: #fff;
    overflow: hidden;
  }
  .app {
    display: flex;
    flex-direction: column;
    width: 2447px;
    height: 1142px;
    overflow: hidden;
    background: #fff;
    color: #14233c;
    font-family: Roboto, 'Noto Sans CJK SC', sans-serif;
  }
  .icon {
    width: 24px;
    height: 24px;
    fill: none;
    stroke: currentColor;
    stroke-width: 1.8;
    flex: none;
    overflow: visible;
  }
  .icon.solid {
    fill: currentColor;
    stroke: none;
  }

  .tickers {
    display: flex;
    height: 59px;
    flex: none;
  }
  .ticker {
    box-sizing: border-box;
    width: 234px;
    padding: 2px 0 0 11.500px;
    display: flex;
    flex-direction: column;
    gap: 2px;
    background: linear-gradient(#dcdee3, #dcdee3) 230px 16px / 1px 24px no-repeat;
  }
  .ticker.active {
    width: 230.500px;
    margin-right: 3.500px;
    padding-top: 4px;
    background: #f5f5f8;
  }
  .name {
    display: flex;
    align-items: center;
    gap: 14px;
    height: 26px;
    font-size: 19.700px;
    color: #727e92;
    white-space: nowrap;
  }
  .active .name {
    color: #0d1b38;
    gap: 15px;
    font-size: 20px;
  }
  .coin {
    width: 18px;
    height: 18px;
    flex: none;
  }
  .quote {
    display: flex;
    gap: 9.500px;
    height: 29px;
    line-height: 29px;
    font-size: 21.200px;
  }
  .small .name { font-size: 17.800px; height: 20px; }
  .small .quote { font-size: 17px; gap: 8px; line-height: 30px; }
  .quote.dark { color: #0d1b38; }
  .quote.flat { color: #1d2c4b; }
  .quote.up { color: #3fc39a; }
  .quote.down { color: #f0565f; }
  .add {
    flex: 1;
    display: flex;
    padding: 19px 0 0 25px;
    border-bottom: 1px solid #eef0f4;
    box-sizing: border-box;
  }
  .add svg {
    width: 16px;
    height: 16px;
    stroke: #8f99a8;
    stroke-width: 1.6;
  }

  .menu {
    display: flex;
    align-items: center;
    height: 48px;
    box-sizing: border-box;
    border-bottom: 1px solid #eef0f5;
    padding-bottom: 2px;
    flex: none;
    font-size: 20px;
    color: #0e1c36;
  }
  .entry {
    display: flex;
    align-items: center;
    gap: 8px;
    margin-left: 23.500px;
    font-size: 20.500px;
  }
  .entry .icon { width: 20px; height: 20px; }
  .entry .icon.chev { width: 19px; height: 19px; }
  .entry.first { margin-left: 18px; }
  .entry.replay { margin-left: 22px; }
  .entry.kind { gap: 10px; margin-left: 21.500px; }
  .entry.cycle { gap: 6px; margin-left: 18px; }
  .periods {
    display: flex;
    align-self: stretch;
    margin-left: 13.500px;
  }
  .period {
    display: flex;
    align-items: center;
    padding: 0 9px;
    letter-spacing: -0.3px;
  }
  .period.on {
    color: #3f8af0;
    background: #eaf4fa;
    padding: 0 8.500px;
  }
  .right {
    display: flex;
    align-items: center;
    align-self: stretch;
    margin-left: auto;
    padding-right: 22px;
  }
  .right .icon { width: 20px; height: 20px; margin-left: 25px; }
  .right .lag { color: #5b677b; letter-spacing: -1px; }
  .right .lag + .icon { margin-left: 21px; }
  .icon.grey { color: #8d98a8; }
  .icon.blue { color: #3e8bef; }
  .show { display: flex; align-items: center; }
  .show span { margin-left: 13px; font-size: 20.500px; }
  .right .show .icon:last-child { margin-left: 14px; }
  .right .icon.full { width: 19px; margin-left: 26px; }
  .cloud {
    display: flex;
    align-items: center;
    align-self: stretch;
    border-left: 2px solid #dde1e8;
    margin-left: 13px;
    margin-bottom: -2px;
    padding: 0 0 2px 11px;
    color: #6a7585;
  }
  .cloud b { font-weight: 400; font-size: 20px; margin-left: 9px; letter-spacing: -1.5px; }
  .right .cloud .icon { margin-left: 0; width: 23px; }
  .right .cloud .chev { width: 18px; height: 18px; margin-left: 8px; }
  .ai {
    width: 80px;
    height: 30px;
    line-height: 30px;
    margin-left: 10px;
    border-radius: 15px 0 15px 0;
    background: linear-gradient(100deg, #2cc5cf, #2f6bff 50%, #c936ff);
    color: #fff;
    font-weight: 500;
    font-size: 18.500px;
    text-align: center;
  }
  .right .ai + .icon { width: 22px; height: 22px; margin-left: 11px; }

  .tools {
    display: flex;
    align-items: center;
    height: 49px;
    box-sizing: border-box;
    padding-left: 6px;
    border-bottom: 1px solid #eef0f5;
    margin-bottom: 2px;
    flex: none;
    color: #5a6880;
  }
  .tool {
    width: 48px;
    display: flex;
    justify-content: center;
    align-items: center;
  }
  .tool.aa { font-size: 25px; }
  .tool.gold { font-size: 23.500px; color: #d8b02d; }
  .tool.bookmark { color: #3e8bef; }
  .tool.redo { color: #d3d8df; }
  .tool.undo .icon, .tool.redo .icon { width: 21px; height: 21px; }
  .sep {
    width: 2px;
    height: 18px;
    margin: 0 9.500px;
    background: #e6e9ef;
  }

  .chart {
    width: 2447px;
    height: 984px;
    flex: none;
    display: block;
  }
  .grid path { stroke: #f8f9fb; stroke-width: 1.6; }
  .grid .rule { stroke: #f3f5f8; fill: none; }
  .watermark {
    font: 41px 'Noto Sans', 'Noto Sans CJK SC', sans-serif;
    fill: #ecedf2;
  }
  .last { stroke: #ef4b56; stroke-width: 1.6; stroke-dasharray: 6 9; }
  .up { fill: #2ebd93; }
  .down { fill: #ef4b56; }
  .hollow { stroke-width: 1.4; }
  .hollow.up { fill: #fff; stroke: #2ebd93; }
  .hollow.down { fill: #fff; stroke: #ef4b56; }
  .series { fill: none; stroke-width: 1.6; stroke-linejoin: round; }
  .study { stroke-width: 1.7; }
  .series.amber { stroke: #ffb200; }
  .series.coral { stroke: #ff857f; }
  .series.pink { stroke: #ed4fc1; }
  .series.teal { stroke: #35d2b2; }
  .zone { fill: rgba(140, 20, 255, 0.31); stroke: #8c17f5; stroke-width: 1.6; }
  .band { fill: #f4e4fd; }
  .guide { stroke: #c9c9c9; stroke-width: 1.6; stroke-dasharray: 6.500 8.500; }
  .cross { stroke: #f0f1f5; stroke-width: 1.8; fill: none; }
  .level { stroke: #ff9c6c; stroke-width: 4.3; }
  .mark { fill: none; stroke: #929dac; stroke-width: 1.5; }
  .legend { font-size: 17.500px; }
  .legend.muted { fill: #929dac; }
  .legend.red { fill: #ef4b56; }
  .legend.coral { fill: #ff857f; }
  .legend.amber { fill: #ffb200; }
  .legend.pink { fill: #ed4fc1; }
  .legend.teal { fill: #35d2b2; }
  .legend.green { fill: #2ebd93; }
  .note { font-size: 17.500px; fill: #111; }
  .arrow { stroke: #111; stroke-width: 1.6; fill: none; }
  .corner rect { fill: #fff; stroke: #d6dae0; stroke-width: 1.6; }
  .corner path { fill: none; stroke: #929dac; stroke-width: 1.5; }
  .axis { font-size: 17.500px; fill: #929dac; }
  .tag { font-size: 17.500px; fill: #fff; }
  .orange { fill: #ff9c6c; }
  .slate { fill: #5b687c; }
  .tick { stroke: #fff; stroke-width: 1.6; fill: none; }
</style>
